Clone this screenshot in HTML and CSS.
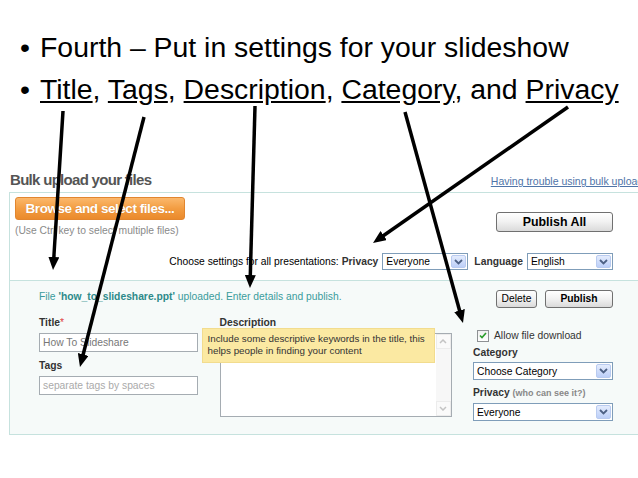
FILE: index.html
```html
<!doctype html>
<html lang="en">
<head>
	<meta charset="UTF-8">
	<title>Bulk upload settings</title>
	<link rel="stylesheet" href="styles.css">
</head>
<body>
<div class="slide">
	<ul class="points">
		<li><span class="dot">•</span><span>Fourth – Put in settings for your slideshow</span></li>
		<li><span class="dot">•</span><span><u>Title</u>, <u>Tags</u>, <u>Description</u>, <u>Category</u>, and <u>Privacy</u></span></li>
	</ul>

	<div class="bulk">
		<div class="bulk_head">
			<h2>Bulk upload your files</h2>
			<a href="javascript:;" class="help">Having trouble using bulk upload?</a>
		</div>
		<div class="panel">
			<div class="top">
				<div class="top_row">
					<div class="browse">
						<a href="javascript:;" class="btn_orange">Browse and select files...</a>
						<p class="hint">(Use Ctrl key to select multiple files)</p>
					</div>
					<button class="btn btn_big">Publish All</button>
				</div>
				<div class="all_settings">
					<span>Choose settings for all presentations:</span>
					<b class="lbl">Privacy</b>
					<span class="select sm w86">Everyone<span class="arrow"><svg width="9" height="6" viewBox="0 0 9 6"><path d="M1 1l3.5 3.5L8 1" fill="none" stroke="#4d6185" stroke-width="1.8"/></svg></span></span>
					<b class="lbl lang">Language</b>
					<span class="select sm w86">English<span class="arrow"><svg width="9" height="6" viewBox="0 0 9 6"><path d="M1 1l3.5 3.5L8 1" fill="none" stroke="#4d6185" stroke-width="1.8"/></svg></span></span>
				</div>
			</div>

			<div class="file">
				<div class="file_head">
					<p class="status">File <b>'how_to_slideshare.ppt'</b> uploaded. Enter details and publish.</p>
					<button class="btn btn_small w41">Delete</button>
					<button class="btn btn_small w68 strong">Publish</button>
				</div>
				<div class="fields">
					<div class="col">
						<label class="lbl">Title<span class="req">*</span></label>
						<div class="input">How To Slideshare</div>
						<label class="lbl gap">Tags</label>
						<div class="input ph">separate tags by spaces</div>
					</div>
					<div class="col desc">
						<label class="lbl">Description</label>
						<div class="textarea">
							<div class="scroll">
								<span class="sbtn"><svg width="8" height="5" viewBox="0 0 8 5"><path d="M1 4l3-3 3 3" fill="none" stroke="#c4c4c4" stroke-width="1.5"/></svg></span>
								<span class="sbtn"><svg width="8" height="5" viewBox="0 0 8 5"><path d="M1 1l3 3 3-3" fill="none" stroke="#c4c4c4" stroke-width="1.5"/></svg></span>
							</div>
						</div>
						<div class="tip">Include some descriptive keywords in the title, this helps people in finding your content</div>
					</div>
					<div class="col">
						<div class="check_row">
							<span class="checkbox"><svg width="8" height="7" viewBox="0 0 8 7"><path d="M1 3.5l2 2L7 1" fill="none" stroke="#2a9d2a" stroke-width="1.6"/></svg></span>
							<span>Allow file download</span>
						</div>
						<label class="lbl cat">Category</label>
						<span class="select">Choose Category<span class="arrow"><svg width="9" height="6" viewBox="0 0 9 6"><path d="M1 1l3.5 3.5L8 1" fill="none" stroke="#4d6185" stroke-width="1.8"/></svg></span></span>
						<label class="lbl priv">Privacy <small>(who can see it?)</small></label>
						<span class="select">Everyone<span class="arrow"><svg width="9" height="6" viewBox="0 0 9 6"><path d="M1 1l3.5 3.5L8 1" fill="none" stroke="#4d6185" stroke-width="1.8"/></svg></span></span>
					</div>
				</div>
			</div>
		</div>
	</div>

	<!-- arrows drawn over the screenshot -->
	<svg class="arrows" width="638" height="478" viewBox="0 0 638 478">
		<defs>
			<marker id="head" markerWidth="13" markerHeight="11" refX="4" refY="5.5" orient="auto" markerUnits="userSpaceOnUse">
				<path d="M0 0L13 5.5L0 11z" fill="#000"/>
			</marker>
		</defs>
		<g stroke="#000" stroke-width="3.5" marker-end="url(#head)">
			<line x1="63" y1="111" x2="53.6" y2="261"/>
			<line x1="144" y1="117" x2="82.2" y2="358.3"/>
			<line x1="255" y1="106" x2="250.2" y2="279"/>
			<line x1="405" y1="112" x2="460.6" y2="314.3"/>
			<line x1="568" y1="107" x2="380.4" y2="237.8"/>
		</g>
	</svg>
</div>
</body>
</html>
```

FILE: styles.css
```css
html,body{margin: 0;overflow: hidden;background-color: #fff;}
body{font-family: "Liberation Sans", Arial, sans-serif;color: #000;}
p{margin: 0;}
.slide{
	position: relative;
	width: 638px;
	height: 478px;
}
.points{
	margin: 0;
	padding: 26px 0 0 0;
	list-style: none;
	font-size: 28.4px;
	line-height: 42px;
}
.points li{
	display: flex;
	white-space: nowrap;
}
.points .dot{
	width: 20px;
	padding-left: 20px;
}
.bulk{
	width: 640px;
	margin: 61px 0 0 9px;
	font-size: 10.3px;
	line-height: 13px;
}
.bulk_head{
	display: flex;
	align-items: baseline;
	margin-bottom: 3px;
}
.bulk_head h2{
	margin: 0 0 0 1px;
	font-size: 15px;
	line-height: 18px;
	letter-spacing: -0.7px;
	color: #555;
}
.help{
	margin-left: auto;
	font-size: 10.5px;
	color: #4f74a8;
	white-space: nowrap;
}
.panel{
	border: 1px solid #c6e2de;
}
.top{
	padding: 4px 35px 10px 5px;
}
.top_row{
	display: flex;
	justify-content: space-between;
	align-items: flex-start;
}
.btn_orange{
	display: block;
	box-sizing: border-box;
	width: 170px;
	height: 23px;
	border: 1px solid #e2862f;
	border-radius: 3px;
	background: linear-gradient(#fbb86c, #f39d42 50%, #ea8a2c);
	color: #fff;
	font-size: 13.5px;
	font-weight: bold;
	line-height: 21px;
	letter-spacing: -0.45px;
	text-align: center;
	text-decoration: none;
	text-shadow: 0 0 1px rgba(160,80,0,0.4);
}
.hint{
	margin-top: 4px;
	color: #8a8a8a;
}
.btn{
	box-sizing: border-box;
	margin: 0;
	padding: 0;
	border: 1px solid #707070;
	border-radius: 3px;
	background: linear-gradient(#fff, #f1f1f1 50%, #dadada);
	font-family: inherit;
	color: #000;
	cursor: pointer;
}
.btn_big{
	width: 117px;
	height: 20px;
	margin-top: 15px;
	font-size: 12.4px;
	font-weight: bold;
	line-height: 18px;
}
.btn_small{
	height: 18px;
	font-size: 10.3px;
	line-height: 16px;
}
.btn_small + .btn_small{margin-left: 8px;}
.w41{width: 41px;}
.w68{width: 68px;}
.strong{font-weight: bold;}
.all_settings{
	display: flex;
	justify-content: flex-end;
	align-items: center;
	margin-top: 16px;
}
.all_settings .lbl{margin: 0 4px 0 3px;}
.all_settings .lang{margin-left: 6px;}
.select{
	display: flex;
	align-items: center;
	box-sizing: border-box;
	height: 18px;
	padding-left: 3px;
	border: 1px solid #7f9db9;
	background-color: #fff;
	white-space: nowrap;
}
.select.sm{height: 17px;}
.w86{width: 86px;}
.select .arrow{
	display: flex;
	align-items: center;
	justify-content: center;
	box-sizing: border-box;
	width: 15px;
	height: calc(100% - 2px);
	margin: 0 1px 0 auto;
	border: 1px solid #b9cbf0;
	border-radius: 2px;
	background: linear-gradient(#e4ecfd, #bccff8);
}
.file{
	padding: 9px 35px 13px 29px;
	border-top: 1px solid #c6e2de;
	background-color: #f6faf9;
}
.file_head{
	display: flex;
	align-items: flex-start;
}
.status{
	flex: 1;
	color: #3a9c9c;
}
.status b{color: #2d8a8a;}
.fields{
	display: grid;
	grid-template-columns: 159px 232px 140px;
	justify-content: space-between;
	margin-top: 8px;
}
.col{
	display: flex;
	flex-direction: column;
}
.lbl{
	display: block;
	font-weight: bold;
	color: #333;
}
.lbl.gap{margin-top: 7px;}
.req{
	color: #e04040;
	font-weight: normal;
}
.input{
	box-sizing: border-box;
	height: 19px;
	margin-top: 4px;
	padding: 0 3px;
	border: 1px solid #a5acb2;
	background-color: #fff;
	color: #777;
	line-height: 17px;
}
.input.ph{color: #aaa;}
.desc{position: relative;}
.textarea{
	display: flex;
	justify-content: flex-end;
	box-sizing: border-box;
	height: 84px;
	margin-top: 4px;
	border: 1px solid #a5acb2;
	background-color: #fff;
}
.scroll{
	display: flex;
	flex-direction: column;
	justify-content: space-between;
	width: 15px;
	background-color: #f7f7f7;
}
.sbtn{
	display: flex;
	align-items: center;
	justify-content: center;
	box-sizing: border-box;
	height: 15px;
	border: 1px solid #ececec;
	background-color: #fafafa;
}
.tip{
	position: absolute;
	top: 12px;
	left: -18px;
	box-sizing: border-box;
	width: 233px;
	height: 35px;
	padding: 4px 5px;
	border: 1px solid #f2dc8e;
	background-color: #fbe9a2;
	color: #333;
	font-size: 9.8px;
	line-height: 12px;
}
.check_row{
	display: flex;
	align-items: center;
	height: 13px;
	margin-top: 13px;
	color: #333;
}
.checkbox{
	display: flex;
	align-items: center;
	justify-content: center;
	box-sizing: border-box;
	width: 12px;
	height: 12px;
	margin: 0 5px 0 4px;
	border: 1px solid #8e9194;
	background: linear-gradient(#f0f0f0, #fff);
}
.lbl.cat{margin-top: 4px;}
.lbl.priv{margin-top: 6px;}
.lbl small{
	font-size: 9px;
	color: #888;
}
.col .select{margin-top: 3px;}
.arrows{
	position: absolute;
	top: 0;
	left: 0;
	pointer-events: none;
}
```
